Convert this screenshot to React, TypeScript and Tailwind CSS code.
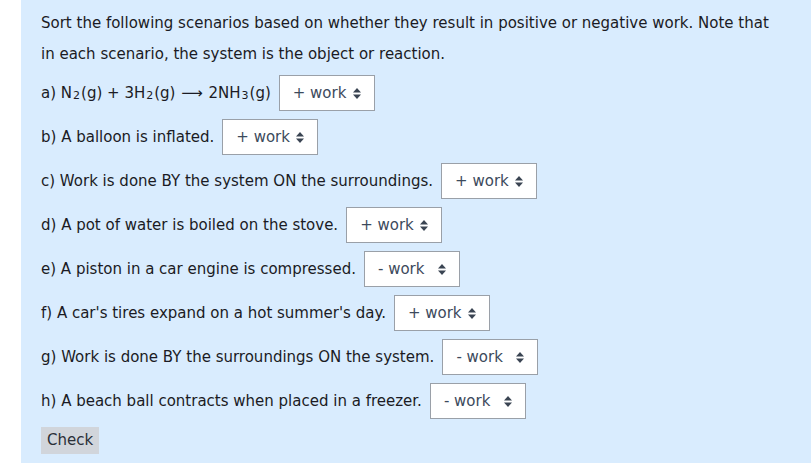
import React from 'react'

type Row = { label: React.ReactNode; value: string }

const Sub = ({ children }: { children: React.ReactNode }) => (
  <span className="text-[11px] relative top-[1px] px-[1px]">{children}</span>
)

const rows: Row[] = [
  {
    label: (
      <>
        a) N<Sub>2</Sub>(g) + 3H<Sub>2</Sub>(g) <span className="mx-[1px]">⟶</span> 2NH<Sub>3</Sub>(g)
      </>
    ),
    value: '+ work',
  },
  { label: 'b) A balloon is inflated.', value: '+ work' },
  { label: 'c) Work is done BY the system ON the surroundings.', value: '+ work' },
  { label: 'd) A pot of water is boiled on the stove.', value: '+ work' },
  { label: 'e) A piston in a car engine is compressed.', value: '- work' },
  { label: "f) A car's tires expand on a hot summer's day.", value: '+ work' },
  { label: 'g) Work is done BY the surroundings ON the system.', value: '- work' },
  { label: 'h) A beach ball contracts when placed in a freezer.', value: '- work' },
]

function Arrows() {
  return (
    <svg width="8" height="11" viewBox="0 0 8 11" className="shrink-0">
      <path d="M4 0 L8 4.5 H0 Z" fill="#3a4452" />
      <path d="M4 11 L8 6.5 H0 Z" fill="#3a4452" />
    </svg>
  )
}

function WorkSelect({ value }: { value: string }) {
  return (
    <div className="ml-[8px] w-[96px] h-[36px] bg-white border border-[#9aa0a8] flex items-center justify-between pl-[13px] pr-[13px] text-[#3c4a5c]">
      <span>{value}</span>
      <Arrows />
    </div>
  )
}

export default function App() {
  return (
    <div className="w-[811px] h-[463px] bg-white pl-[21px]" style={{ fontFamily: '"DejaVu Sans", Verdana, sans-serif' }}>
      <div className="h-[463px] bg-[#d9ecfe] pl-[20px] pt-[8px] text-[15px] text-[#1b1b24]">
        <p className="leading-[31px] w-[745px]">
          Sort the following scenarios based on whether they result in positive or negative work. Note that in each
          scenario, the system is the object or reaction.
        </p>
        <div className="mt-[5px] flex flex-col gap-[8px]">
          {rows.map((r, i) => (
            <div key={i} className="flex items-center">
              <span>{r.label}</span>
              <WorkSelect value={r.value} />
            </div>
          ))}
        </div>
        <button className="mt-[8px] h-[27px] w-[58px] bg-[#d1d5db] text-[#2a2f38] flex items-center justify-center">
          Check
        </button>
      </div>
    </div>
  )
}
